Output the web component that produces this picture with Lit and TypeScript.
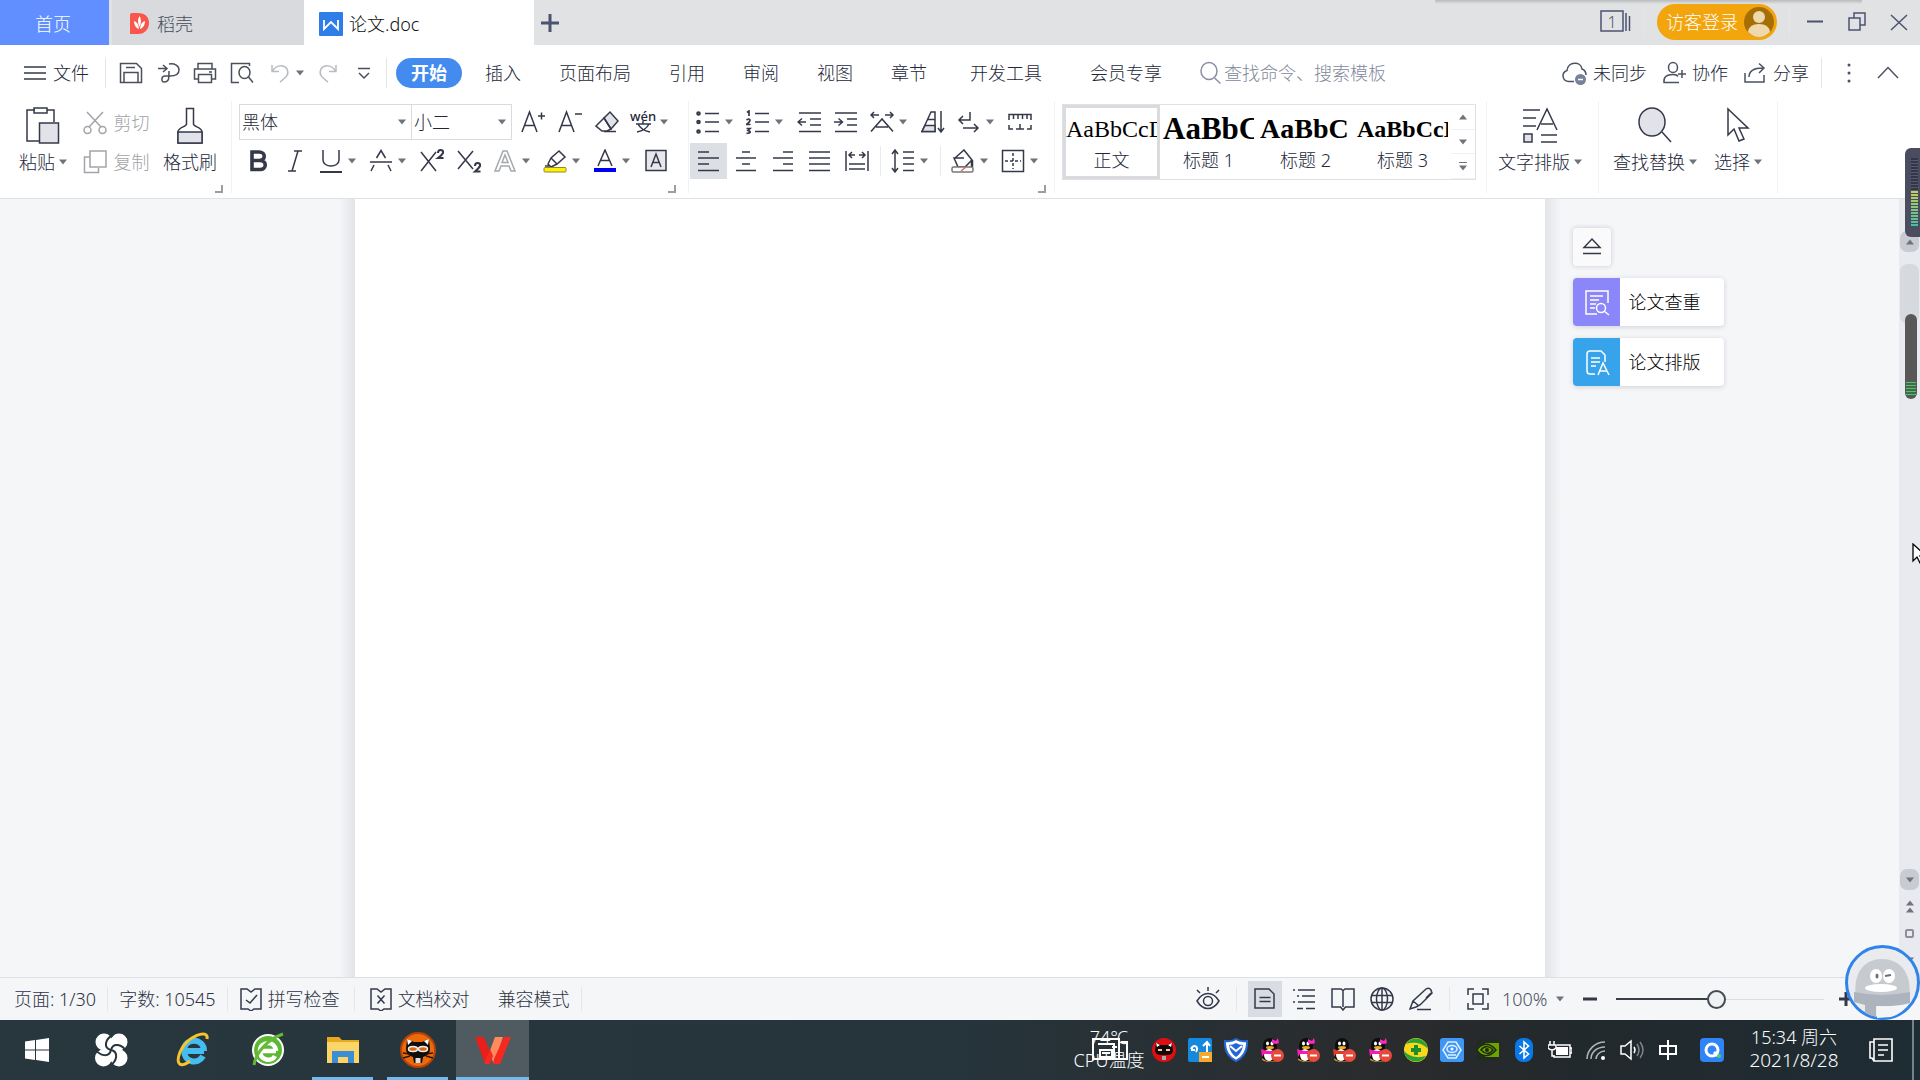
import { LitElement, html, svg, css, TemplateResult, SVGTemplateResult } from "lit";
import { customElement, state } from "lit/decorators.js";
import { classMap } from "lit/directives/class-map.js";

const icon = (body: SVGTemplateResult, w = 24, h = 24, cls = "ico"): TemplateResult =>
  html`<svg class=${cls} width=${w} height=${h} viewBox="0 0 ${w} ${h}" aria-hidden="true">${body}</svg>`;

const caret = html`<svg class="caret" width="8" height="6" viewBox="0 0 8 6" aria-hidden="true"><path d="M0 .5h8L4 5.5z" /></svg>`;

const I = {
  docer: svg`<path fill="#f9574c" d="M0 2q0-2 2-2h6c7 0 11 4 11 10s-4 11-11 11H0z"/><path fill="#fff" d="M9.500 3c2 3 2 7 0 11-2-4-2-8 0-11zM4 8c3 1 4.500 3 5 8-3-1-5-4-5-8zM15 8c-3 1-4.500 3-5 8 3-1 5-4 5-8z"/>`,
  writer: svg`<rect width="24" height="24" rx="1" fill="#2f7de9"/><path d="M5 8v9l7-7 7 7V8" fill="none" stroke="#fff" stroke-width="1.800"/>`,
  plus: svg`<path d="M10 1v18M1 10h18" stroke-width="3"/>`,
  count: svg`<rect x="1" y="1" width="22" height="20"/><path d="M26 3v18M29.500 6v15"/>`,
  person: svg`<circle cx="15" cy="15" r="15" fill="#a66f06"/><circle cx="15" cy="10" r="6" fill="#edd9ac"/><path d="M4 25q1-8 11-8t11 8q-5 5-11 5T4 25z" fill="#edd9ac"/>`,
  min: svg`<path d="M4 11.500h16" stroke-width="2"/>`,
  restore: svg`<path d="M4 8h11v12H4zM9 8V3h11v12h-5"/>`,
  close: svg`<path d="M4 5l16 15M20 5L4 20"/>`,
  burger: svg`<path d="M0 6h22M0 12h22M0 18h22"/>`,
  save: svg`<path d="M1.500 2.500h16l5 5v14h-21zM5 21.500v-10h14v10M7 6.500h9"/>`,
  exportDoc: svg`<path d="M2 7.500h8M7 4l4 3.500L7 11M13 3c6-1 10 2 10 6s-4 6-9 6H9c-4 0-4 6-1 6 5 0 5-3 5-11"/>`,
  print: svg`<path d="M5 8V2.500h14V8M5 18H1.500V8h21v10H19M5.500 13.500h13v8h-13zM16 11h3"/>`,
  preview: svg`<path d="M9 21.500H1.500v-19h18V5M18.500 16l4.500 5.500"/><ellipse cx="14.500" cy="11.500" rx="5.500" ry="6"/>`,
  undo: svg`<path d="M5 4v6.500h7M5.500 10C9 4 17 3 20 8c3 6-2 9-7 13"/>`,
  redo: svg`<path d="M21 4v6.500h-7M20.500 10C17 4 9 3 6 8c-3 6 2 9 7 13"/>`,
  custom: svg`<path d="M6 7.500h12M7 12l5 5 5-5"/>`,
  search: svg`<ellipse cx="9" cy="10" rx="8" ry="8.500"/><path d="M14.500 17l6 5.500"/>`,
  cloud: svg`<path d="M12 20.500H7c-7 0-8-9-2-11C6 0 19 0 20 8c3 1 4 3 4 6"/><circle cx="18.500" cy="18.500" r="5.500" fill="#77819a" stroke="none"/><path d="M16 18.500h5" stroke="#fff"/>`,
  collab: svg`<ellipse cx="11" cy="6.500" rx="4.500" ry="5"/><path d="M17 21.500H2q-1-8 9-8 4 0 5 2M20 9v8M16 13h8"/>`,
  share: svg`<path d="M2 12v9h19v-7M6 16c0-6 5-9 14-9M16 2.500l5 4.500-5 5"/>`,
  dots: svg`<g fill="#4b5263" stroke="none"><circle cx="12" cy="4" r="1.500"/><circle cx="12" cy="12" r="1.500"/><circle cx="12" cy="20" r="1.500"/></g>`,
  up: svg`<path d="M2 17L12 6.500 22 17"/>`,
  paste: svg`<path d="M10 3H2v31h12M22 3h7v12"/><rect x="9" y="1" width="13" height="5"/><rect x="14.500" y="16" width="19" height="20" fill="#e1e3e9"/>`,
  cut: svg`<path d="M4 1l14 15M20 1L6 16"/><circle cx="4.500" cy="19" r="3.500"/><circle cx="19.500" cy="19" r="3.500"/>`,
  copy: svg`<path d="M7 7H1.500v15.500h14V18"/><rect x="7" y="1" width="16" height="16"/>`,
  brush: svg`<path d="M10.500 1.500h7V17c0 3 8.500 3 8.500 8v11H2V25c0-5 8.500-5 8.500-8z"/><path d="M2 25h24v11H2z" fill="#e1e3e9"/>`,
  aPlus: svg`<path d="M1 22L8.500 2 16 22M4 15.500h9M17 6h7M20.500 2.500v7"/>`,
  aMinus: svg`<path d="M1 22L8.500 2 16 22M4 15.500h9M17 4h7"/>`,
  eraser: svg`<path d="M9 8l6-6 8 9-7 8z" fill="#e1e3e9"/><path d="M9 8l-8 8 6 5h5l4-2zM9 21.500h12"/>`,
  text: svg`<path d="M5 14h15M12 11v3M7 14c2 4 7 7 12 8M18 14c-2 4-6 7-12 8"/>`,
  bold: svg`<path d="M6 3h7c7 0 7 8.500 0 8.500H6zM6 11.500h8c7 0 7 9 0 9H6z" stroke-width="3.600"/>`,
  italic: svg`<path d="M11 2h8M5 22h8M15 2L9 22"/>`,
  under: svg`<path d="M4 1v10c0 8 16 8 16 0V1"/><path d="M1 23h22" stroke-width="2"/>`,
  strike: svg`<path d="M7.500 9L12 1.500 16.500 9M5 16l-3 6M19 16l3 6M1 13h22"/>`,
  sup: svg`<path d="M1 3l15 19M16 3L1 22"/><path d="M18 4q0-3 2.500-3 3 0 2.500 3-1 2-5 5h5.500" stroke-width="2"/>`,
  sub: svg`<path d="M1 2l15 18M16 2L1 20"/><path d="M18 17q0-3 2.500-3 3 0 2.500 3-1 2-5 5.500h5.500" stroke-width="2"/>`,
  ghostA: svg`<path d="M2 22L10 2h4l8 20h-4l-2-5H8l-2 5zM9 13.500h6L12 6z" stroke="#a5a8ad"/>`,
  marker: svg`<path d="M5 15l3-6 8-7 6 6-8 7-6 3zM8 9l6 6M2 17h5" /><rect x="1" y="18.500" width="22" height="4.500" rx="1" fill="#fff200" stroke="#8a8a3a" stroke-width="1"/>`,
  fontColor: svg`<path d="M5 17L12 1l7 16M7.500 11.500h9"/><path d="M1 21h22" stroke="#0000f0" stroke-width="4"/>`,
  boxedA: svg`<rect x="2" y="1.500" width="20" height="20" fill="#e6e8ec"/><path d="M7 18l5-13 5 13M9 13.500h6"/>`,
  bullets: svg`<path d="M9 3.500h14M9 12h14M9 21.500h14"/><g stroke-width="2"><circle cx="2.500" cy="3.500" r="1.300"/><circle cx="2.500" cy="12" r="1.300"/><circle cx="2.500" cy="21.500" r="1.300"/></g>`,
  numbers: svg`<path d="M9 3.500h14M9 12h14M9 21.500h14"/><path d="M1 2.500L3 1v5M.5 10q3-2 3.500 0 0 2-3.500 4.500h4M.5 18.500h3.500l-2 2q5 2-1.500 3" stroke-width="1.700"/>`,
  outdent: svg`<path d="M2 3h22M13 9h11M13 15h11M2 21.500h22M9 12H1M5 8.500L1 12l4 3.500"/>`,
  indent: svg`<path d="M1 3h22M13 9h10M13 15h10M1 21.500h22M0 12h8M4.500 8.500l4 3.500-4 3.500"/>`,
  scale: svg`<path d="M1 21.500L12 9l11 12.500M6 17h12M1 5h8M4 2L1 5l3 3M15 5h8M20 2l3 3-3 3"/>`,
  sort: svg`<path d="M1 21.500L10 2h4v19.500z"/><path d="M4 15.500h10v6H1z" fill="#e1e3e9"/><path d="M7 9.500h7M20 1v21M17 18l3 4 3-4"/>`,
  wrap: svg`<path d="M13 2v8H2M6 6l-4 4 4 4M6 18h15M17 14l4 4-4 4"/>`,
  ruler: svg`<path d="M1 10V4.500h22V10M5.500 4.500V9M10 4.500V9M14.500 4.500V9M19 4.500V9M1 15v4h4M19 19h4v-4M12 14v5M8 19h8"/>`,
  alignL: svg`<path d="M1 3h11M1 9h21M1 15h11M1 21.500h21"/>`,
  alignC: svg`<path d="M8 3h8M2 9h20M8 15h8M2 21.500h20"/>`,
  alignR: svg`<path d="M12 3h10M2 9h20M12 15h10M2 21.500h20"/>`,
  alignJ: svg`<path d="M1 3h21M1 9h21M1 15h21M1 21.500h21"/>`,
  dist: svg`<path d="M1 2v20M23 2v20M4 15h16M4 20h16M4 6h6M7 3L4 6l3 3M14 6h6M17 3l3 3-3 3"/>`,
  spacing: svg`<path d="M4 1v22M1 5l3-4 3 4M1 19l3 4 3-4M12 3h11M12 9h11M12 15h11M12 21.500h11"/>`,
  fill: svg`<path d="M4 9l9-8 8 10-7 7H7L3 9h10"/><path d="M21 11v7" stroke-width="2.500"/><rect x="1" y="18" width="21" height="5" rx="1.500" fill="#fff" stroke="#777"/><path d="M10 22l5-4" stroke="#d66"/>`,
  borders: svg`<rect x="1.500" y="1.500" width="21" height="21"/><path d="M12 4v16M4 12h16" stroke-dasharray="3 2"/>`,
  typeset: svg`<path d="M1 3h17M1 11h13M1 19h13M15 23L25 2l10 21M19 17h12M19 28h16M19 35h16"/><rect x="2" y="27" width="8" height="8" fill="#e1e3e9"/>`,
  find: svg`<ellipse cx="15" cy="15" rx="13" ry="14" fill="#e1e3e9"/><path d="M25 25l9 10"/>`,
  select: svg`<path d="M8 2v26l6-6 5 12 5-2-5-11h9z"/>`,
  spell: svg`<path d="M2 2h6l4 3 4-3h6v20H15l-3 2-3-2H2z"/><path d="M7 13l4 3 7-8"/>`,
  proof: svg`<path d="M2 2h6l4 3 4-3h6v20H15l-3 2-3-2H2z"/><path d="M8.500 8.500l7 8M15.500 8.500l-7 8"/>`,
  eye: svg`<path d="M1 14C7 4 17 4 23 14 17 24 7 24 1 14zM12 4V0M4 6L1 3M20 6l3-3"/><circle cx="12" cy="14" r="4.500"/>`,
  page: svg`<path d="M2 2h14l5 5v14H2zM6.500 10.500h11M6.500 14.500h11"/>`,
  outline: svg`<path d="M6 3h17M10 9h13M6 15h17M14 21.500h9M1 3h2M5 9h2M1 15h2M5 21.500h6"/>`,
  book: svg`<path d="M1 2h9l2 1.500L14 2h9v18h-8.500L12 23l-2.500-3H1zM12 3.500V20"/>`,
  globe: svg`<circle cx="12" cy="12" r="11"/><ellipse cx="12" cy="12" rx="5.500" ry="11"/><path d="M1.500 8.500h21M1.500 15.500h21M12 1v22"/>`,
  pen: svg`<path d="M1 22l3-8L17 2q3-2 5 1l1 3L11 18l-4 2zM4 14l6 5M8 22.500h14M17 11l5-5"/>`,
  fit: svg`<path d="M2 8V2h6M16 2h6v6M22 16v6h-6M8 22H2v-6"/><rect x="7" y="7" width="10" height="10"/>`,
  eject: svg`<path d="M4 12.500L12 4l8 8.500zM3 18.500h18" fill="none"/>`,
  check: svg`<path d="M13 25H2V2h22v12M6 7h13M6 11h9M6 15h6M6 19h5M20 22l5 4"/><circle cx="17" cy="19" r="4.500"/>`,
  format: svg`<path d="M11 25H6q-3 0-3-3V5q0-3 3-3h11l4 4v7M7 9h9M7 13h9M7 17h5M14 26l5-12 6 12M16 22h7"/>`,
  win: svg`<path fill="#fff" d="M0 3.500L10 2v9.500H0zM11 2l13-2v11.500H11zM0 12.500h10V22L0 20.500zM11 12.500h13V24l-13-2z"/>`,
  fan: svg`<g fill="#fff"><circle cx="10" cy="9" r="8.500"/><circle cx="25" cy="9" r="8.500"/><circle cx="25" cy="25" r="8.500"/><circle cx="9.500" cy="25" r="8.500"/><circle cx="17" cy="17" r="5"/></g><g fill="none" stroke="#28363c" stroke-width="2"><path d="M17 17C9 15 11 6 19 2"/><path d="M17 17c2-8 11-6 16 2"/><path d="M17 17c8 2 6 11-1 16"/><path d="M17 17c-2 8-11 6-16-1"/></g>`,
  ie: svg`<path d="M28 19H10M28 19C28 6 9 5 8 18c0 13 14 15 19 6" fill="none" stroke="#45bdf0" stroke-width="6"/><path d="M31 7C33-4 11 4 4 20-1 33 5 36 14 29" fill="none" stroke="#f5c32c" stroke-width="3"/>`,
  green: svg`<circle cx="17" cy="18" r="16" fill="#fff"/><circle cx="17" cy="18" r="14" fill="#5cb832"/><path d="M25 19H10M25 19C24 8 9 9 9 19c0 10 12 11 15 5" fill="none" stroke="#fff" stroke-width="4.500"/><path d="M3 33C5 20 17 7 32 2" fill="none" stroke="#64ba36" stroke-width="3"/>`,
  folder: svg`<path fill="#e9a91f" d="M1 4h12l3 3h17v6H1z"/><path fill="#fcd568" d="M1 9h32v21H1z"/><path fill="#3b8dd4" d="M6 18h22v12h-6v-6H12v6H6z"/>`,
  cat: svg`<circle cx="18" cy="18" r="17" fill="#ec6a0c" stroke="#b84206" stroke-width="2"/><path fill="#100e0c" d="M7 7l7 3h8l7-3 1 10q0 6-7 8l-1 6h-8l-1-6q-7-2-7-8z"/><path d="M7 7l5 2-4 4zM29 7l-5 2 4 4z" fill="#fff"/><ellipse cx="13" cy="17" rx="4.500" ry="2.500" fill="#dc6616" stroke="#eee" stroke-width="1.500"/><ellipse cx="23" cy="17" rx="4.500" ry="2.500" fill="#dc6616" stroke="#eee" stroke-width="1.500"/><path d="M15.500 26h5v5h-5z" fill="#ddd"/><path d="M3 21l7 1M3 26l7-2M33 21l-7 1M33 26l-7-2" stroke="#331505"/>`,
  wps: svg`<path fill="#e8201c" d="M0 4h9l7 17-3 10h-3z"/><path fill="#ff8a5c" d="M10 31L20 4h8l-9 27-3-7z"/><path fill="#f7281e" d="M18 31h7L36 4h-7L19 26z"/><path fill="#f7281e" d="M10 31h5l3-8-3-7z"/>`,
  overlap: svg`<g fill="none" stroke="#fff" stroke-width="2"><rect x="1" y="1" width="26" height="20"/><path d="M29 4h6v17h-8M6 6h16v15M8 12h12v7H8zM10 15h8M20 9h5"/></g>`,
  redCat: svg`<circle cx="12" cy="12" r="12" fill="#df0e13"/><path d="M4 5l5 2h6l5-2 1 8q-1 4-6 4H9q-5 0-6-4z" fill="#100909"/><path d="M4 5l4 2-3 2zM20 5l-4 2 3 2z" fill="#fff"/><path d="M6 12h4M14 12h4" stroke="#f7c6a2" stroke-width="2"/><path d="M10 18h4v4h-4z" fill="#aaa"/>`,
  netApp: svg`<rect width="24" height="24" rx="2" fill="#1688dd"/><path d="M3 11c3-6 8-2 5 3M19 14V4M15 8l4-4 3 4M4 9v3h3" fill="none" stroke="#fff" stroke-width="2"/><rect x="11" y="14" width="13" height="10" fill="#f9a72d"/><path d="M14 19h7" stroke="#fff" stroke-width="2"/>`,
  shield: svg`<path d="M1 3q7 1 11-2 4 3 11 2 1 14-11 20Q0 17 1 3z" fill="#fff" stroke="#2567d3" stroke-width="2"/><path d="M5 7q4 0 7-2 3 2 7 2-1 8-7 12Q6 15 5 7z" fill="#2567d3"/><path d="M6 8l6 5 6-5" fill="none" stroke="#fff" stroke-width="2"/>`,
  medic: svg`<circle cx="12" cy="12" r="12" fill="#f9d71c"/><path d="M2 6C9-4 23 1 24 11 17 4 9 4 2 6z" fill="#2aa336"/><path d="M22 18C15 28 1 23 0 13c7 7 15 7 22 5z" fill="#2aa336"/><path d="M12 7v10M7 12h10" stroke="#198e2b" stroke-width="4"/>`,
  hex: svg`<rect width="24" height="24" rx="3" fill="#3f97f5"/><g fill="none" stroke="#e1f0ff" stroke-width="1.500"><path d="M8 4h8l5 8-5 8H8l-5-8z"/><ellipse cx="12" cy="11" rx="5" ry="3.500"/><path d="M8 17h8"/></g><circle cx="12" cy="11" r="1.500" fill="#fff"/>`,
  nvidia: svg`<rect x="1" y="1" width="23" height="22" fill="#222b22"/><path d="M9 5h14v14H9z" fill="#6ba300"/><path d="M1 12C5 5 13 4 20 12 13 20 5 19 1 12z" fill="#6ba300" stroke="#1f290f"/><path d="M5 12c4-5 9-4 12 0-4 5-8 4-12 0z" fill="none" stroke="#1f290f" stroke-width="1.500"/><circle cx="11" cy="12" r="2" fill="#1f290f"/>`,
  bt: svg`<rect x="3" y="0" width="18" height="24" rx="8" fill="#0a78e6"/><path d="M7.500 8l9 8-4.500 4V4l4.500 4-9 8" fill="none" stroke="#fff" stroke-width="1.600"/>`,
  battery: svg`<g fill="none" stroke="#fff" stroke-width="1.500"><path d="M9 7h13v12H6v-2M22 10h2v5h-2M2 3v4M6 3v4M0 7h8v3q-4 4-8 0zM4 12v6h2"/></g><path d="M8 9h12v8H8z" fill="#fff"/>`,
  wifi: svg`<g fill="none" stroke="#aeb5b9" stroke-width="1.600"><path d="M3 21C3 12 11 4 21 4M7 21c0-7 6-12 14-12M12 21c0-4 4-8 9-8"/></g><circle cx="19" cy="20" r="2" fill="#fff"/>`,
  volume: svg`<g fill="none" stroke="#fff" stroke-width="1.500"><path d="M1 8h4l6-5v18l-6-5H1z"/><path d="M14 9q2 3 0 6"/><path d="M17 6q4 6 0 12M20 4q6 8 0 16" stroke="#7d868b"/></g>`,
  ime: svg`<path d="M4 8h16v8H4zM12 2v20" fill="none" stroke="#fff" stroke-width="2"/>`,
  qApp: svg`<rect width="24" height="24" rx="4" fill="#2f84f7"/><circle cx="12" cy="12" r="6" fill="none" stroke="#fff" stroke-width="3"/><path d="M14 14l4 4" stroke="#fff" stroke-width="3"/><circle cx="19" cy="18" r="2" fill="#57d15c"/>`,
  notice: svg`<g fill="none" stroke="#fff" stroke-width="1.600"><path d="M5 1h18v22H5zM5 4H1v16h2l2 3M9 7h10M9 12h10M9 17h6"/></g>`,
  mascot: svg`<circle cx="37.500" cy="37.500" r="36" fill="#e9ebef" stroke="#2f83ea" stroke-width="3"/><path d="M11 54C7 27 20 14 37 14s31 13 27 40z" fill="#c7cacf"/><path d="M9 47q28 6 56 0v11q-15 4-34 3v11l-11-4V60L9 57z" fill="#adb4be"/><path d="M32 61q18 1 31-2-6 10-17 13l-14 1z" fill="#f4f5f7"/><ellipse cx="31" cy="31" rx="6" ry="7" fill="#fff"/><ellipse cx="44" cy="31" rx="6" ry="7" fill="#fff"/><ellipse cx="32" cy="31" rx="1.500" ry="2.500" fill="#6a6f78"/><path d="M40 31l6-1" stroke="#6a6f78" stroke-width="2"/><ellipse cx="36" cy="43" rx="16" ry="4" fill="#fff"/>`,
  pointer: svg`<path d="M1 1v17l4-4 3 6 3-1-3-6h6z" fill="#fff" stroke="#000" stroke-width="1.300"/>`,
};

const penguin = (scarf: string, bow: boolean) => svg`<ellipse cx="10" cy="21" rx="8" ry="3" fill="#e8a619"/><ellipse cx="10" cy="8" rx="7" ry="8" fill="#0d0d0d"/><path d="M2 12h16l2 8q-10 7-18 0z" fill="#0d0d0d"/><ellipse cx="9" cy="17" rx="5" ry="6" fill="#fff"/><path d="M1 11q9 4 18 0l-1 5H4l-2 3z" fill=${scarf}/><ellipse cx="7.500" cy="5.500" rx="1.500" ry="2" fill="#fff"/><ellipse cx="12" cy="5.500" rx="1.500" ry="2" fill="#fff"/><ellipse cx="10" cy="9.500" rx="4" ry="1.500" fill="#f2ae1c"/>${bow ? svg`<path d="M12 1l4 2 2-3 1 5-3 1-4-1z" fill="#ff29c5"/>` : null}<circle cx="17.500" cy="17.500" r="6.500" fill="#e64a3b"/><path d="M14 17.500h7" stroke="#fff" stroke-width="2"/>`;

type Tool = [string, SVGTemplateResult, boolean?];

const FONT_TOP: Tool[] = [["增大字号", I.aPlus], ["减小字号", I.aMinus], ["清除格式", I.eraser]];
const FONT_ROW: Tool[] = [
  ["加粗", I.bold], ["倾斜", I.italic], ["下划线", I.under, true], ["删除线", I.strike, true], ["上标", I.sup],
  ["下标", I.sub], ["文字效果", I.ghostA, true], ["突出显示", I.marker, true], ["字体颜色", I.fontColor, true], ["字符底纹", I.boxedA],
];
const PARA_TOP: Tool[] = [
  ["项目符号", I.bullets, true], ["编号", I.numbers, true], ["减少缩进量", I.outdent], ["增加缩进量", I.indent],
  ["中文版式", I.scale, true], ["排序", I.sort], ["显示段落标记", I.wrap, true], ["标尺", I.ruler],
];
const ALIGN: Tool[] = [["左对齐", I.alignL], ["居中", I.alignC], ["右对齐", I.alignR], ["两端对齐", I.alignJ], ["分散对齐", I.dist]];
const VIEWS: Tool[] = [["页面视图", I.page], ["大纲", I.outline], ["阅读版式", I.book], ["Web 版式", I.globe], ["写作模式", I.pen]];
const TABS = ["开始", "插入", "页面布局", "引用", "审阅", "视图", "章节", "开发工具", "会员专享"];
const STYLES: [string, string, string][] = [
  ["正文", "body", "AaBbCcD"], ["标题 1", "h1", "AaBbC"], ["标题 2", "h2", "AaBbC"], ["标题 3", "h3", "AaBbCcD"],
];
const TRAY: Tool[] = [
  ["录屏", I.redCat], ["网络", I.netApp], ["电脑管家", I.shield], ["QQ 1", penguin("#f41fb2", true)], ["QQ 2", penguin("#f41fb2", true)],
  ["QQ 3", penguin("#e03a2b", false)], ["QQ 4", penguin("#f41fb2", true)], ["安全卫士", I.medic], ["助手", I.hex], ["显卡设置", I.nvidia],
  ["蓝牙", I.bt], ["电源", I.battery], ["无线网络", I.wifi], ["音量", I.volume], ["输入法", I.ime],
];

@customElement("app-root")
export class AppRoot extends LitElement {
  @state() private tab = "开始";
  @state() private align = "左对齐";
  @state() private view = "页面视图";
  @state() private style_ = "正文";
  @state() private zoom = 48;

  static styles = css`
    :host {
      display: flex;
      flex-direction: column;
      height: 100vh;
      overflow: hidden;
      background: #fff;
      color: #23273a;
      font: 300 18px/24px "Noto Sans", "Noto Sans CJK SC", sans-serif;
    }
    * { box-sizing: border-box; }
    button, input, select {
      font: inherit;
      color: inherit;
      background: none;
      border: 0;
      padding: 0;
      margin: 0;
      outline: none;
    }
    button {
      display: flex;
      align-items: center;
      justify-content: center;
      flex: none;
      white-space: nowrap;
    }
    svg { display: block; flex: none; }
    .ico { fill: none; stroke: #343849; stroke-width: 1.500; }
    .caret { fill: #6f737c; }
    .grow { flex: 1; }
    .rule { width: 1px; height: 30px; background: #e4e6ea; flex: none; }

    .titlebar { display: flex; height: 45px; flex: none; background: #e1e2e4; position: relative; }
    .apptab { gap: 8px; padding-top: 2px; justify-content: flex-start; }
    .apptab.home { width: 109px; margin-right: 3px; padding-left: 35px; background: #618fff; color: #fff; }
    .apptab.docer { width: 192px; padding-left: 18px; background: #d9dadd; color: #464b5c; }
    .apptab.doc { width: 230px; padding-left: 15px; gap: 6px; background: #fff; color: #111; }
    .newtab { width: 32px; }
    .titlebar .ico { stroke: #4c5270; }
    .docer .ico, .doc .ico, .guest .ico { stroke: none; }
    .doc .ico path { stroke: #fff; }
    .edge { position: absolute; top: 0; left: 1435px; right: 58px; height: 4px; background: linear-gradient(#b9babc, #e1e2e4); }
    .winright { display: flex; align-items: center; padding-bottom: 1px; }
    .count { display: grid; width: 32px; height: 24px; margin-right: 12px; }
    .count > * { grid-area: 1 / 1; }
    .count span { width: 24px; font-size: 16px; line-height: 22px; text-align: center; color: #4c5270; }
    .guest { height: 36px; margin: 0 12px; padding: 0 3px 0 9px; gap: 6px; border-radius: 18px; background: #f3a50e; color: #fff; }
    .guest + .rule { margin-right: 4px; }
    .winbtn { width: 42px; height: 40px; }

    .menubar { display: flex; align-items: center; height: 56px; flex: none; padding: 0 20px 0 24px; }
    .file { gap: 7px; margin-right: 16px; }
    .quick { display: flex; align-items: center; padding-left: 6px; margin-right: 4px; }
    .quick button { width: 37px; height: 32px; }
    .quick .pair { width: 48px; gap: 5px; padding-left: 7px; justify-content: flex-start; }
    .quick .ico { stroke: #4b4f5b; }
    .quick .off .ico { stroke: #b9bcc2; }
    .tabs { display: flex; gap: 8px; margin-left: 9px; }
    .tabs button { height: 30px; padding: 0 15px; border-radius: 15px; }
    .tabs .wide { padding: 0 20px; }
    .tabs .on { background: #448bf0; color: #fff; font-weight: 700; }
    .search { display: flex; align-items: center; margin-left: 18px; width: 230px; }
    .search .ico, .search input::placeholder { stroke: #8790a3; color: #7f889c; opacity: 1; }
    .search input { width: 200px; min-width: 0; }
    .account { display: flex; align-items: center; gap: 15px; }
    .account button { gap: 6px; }
    .account .ico { stroke: #4b5263; }
    .account .slim { width: 24px; }
    .account .rule { margin-left: -3px; }

    .ribbon { display: flex; height: 98px; flex: none; border-bottom: 1px solid #dfe1e4; }
    .group { display: flex; align-items: flex-start; position: relative; height: 92px; padding-top: 3px; border-right: 1px solid #f1f2f4; }
    .clip { width: 232px; padding-left: 19px; }
    .big { flex-direction: column; align-items: center; gap: 5px; padding-top: 3px; }
    .big span { display: flex; align-items: center; gap: 4px; }
    .pile { display: flex; flex-direction: column; gap: 15px; width: 66px; margin: 7px 14px 0 16px; }
    .pile button { gap: 7px; color: #a2a4a9; }
    .pile .ico { stroke: #a2a4a9; }
    .corner { position: absolute; right: 8px; bottom: 0; width: 8px; height: 8px; border: solid #9a9da3; border-width: 0 2px 2px 0; }
    .font { width: 457px; padding-left: 7px; }
    .font .corner { right: 12px; }
    .para { width: 366px; padding-left: 1px; }
    .rows { display: flex; flex-direction: column; gap: 3px; }
    .row { display: flex; align-items: center; height: 36px; }
    .combo { display: grid; align-items: center; height: 36px; border: 1px solid #d9dbe0; }
    .combo > * { grid-area: 1 / 1; }
    .combo select { appearance: none; width: 100%; padding-left: 2px; }
    .combo .caret { justify-self: end; margin-right: 5px; pointer-events: none; }
    .combo.name { width: 173px; }
    .combo.size { width: 100px; border-left: 0; margin-right: 2px; }
    .tool { width: 37px; height: 36px; }
    .tool.drop { width: 50px; padding-left: 6px; gap: 5px; justify-content: flex-start; }
    .tool.on { background: #dcdfe4; }
    .row .rule { margin: 0 4px 0 5px; background: #e9ebee; }
    .wen { display: grid; width: 24px; height: 24px; }
    .wen > * { grid-area: 1 / 1; }
    .wen span { font-size: 13px; font-weight: 500; line-height: 12px; text-align: center; margin: 0 -4px; }
    .gallery { padding: 3px 10px 0 7px; width: 432px; }
    .styles { display: flex; height: 76px; border: 1px solid #dfe1e5; }
    .swatch { flex-direction: column; gap: 3px; width: 97px; height: 74px; overflow: hidden; border: 3px solid transparent; }
    .swatch.on { border-color: #d9dbdf; }
    .sample { width: 91px; height: 32px; line-height: 32px; overflow: hidden; text-align: left; color: #000; font-family: "Liberation Serif", serif; font-weight: 700; }
    .sample.body { font-weight: 400; font-size: 24px; }
    .sample.h1 { font-size: 31px; }
    .sample.h2 { font-size: 28px; }
    .sample.h3 { font-size: 24px; }
    .stepper { display: flex; flex-direction: column; width: 24px; }
    .stepper button { flex: 1; border-bottom: 1px solid #eef0f2; flex-direction: column; gap: 2px; }
    .stepper .bar { width: 8px; height: 1px; background: #6f737c; }
    .typeset { padding-left: 11px; width: 112px; }
    .edit { padding-left: 14px; gap: 17px; width: 179px; }

    .work { display: flex; flex: 1; min-height: 0; background: #f5f6f8; }
    .canvas { display: grid; grid-template-columns: 1fr 1190px 1fr; flex: 1; min-width: 0; }
    .shade { justify-self: end; width: 16px; background: linear-gradient(90deg, #f5f6f8, #e3e4e8); }
    .sheet { background: #fff; }
    .side { display: flex; flex-direction: column; align-items: flex-start; gap: 12px; padding: 29px 0 0 28px; background: linear-gradient(90deg, #e3e4e8, #f5f6f8 16px); }
    .side .fold { width: 38px; height: 38px; border-radius: 4px; background: #fafafb; box-shadow: 0 0 5px #c9cbd0; }
    .card { width: 151px; height: 48px; border-radius: 4px; overflow: hidden; background: #fff; color: #000; box-shadow: 0 1px 5px #cfd1d6; justify-content: flex-start; gap: 9px; }
    .badge { display: flex; align-items: center; justify-content: center; width: 47px; height: 48px; padding-left: 3px; background: #8c86fb; }
    .badge.blue { background: #37a3ea; }
    .badge .ico { stroke: #fff; }
    .scroll { position: relative; display: flex; flex-direction: column; align-items: center; width: 21px; padding: 32px 0 6px; background: #e8eaef; }
    .scroll button { width: 19px; height: 21px; border-radius: 7px; background: #c9cbd2; }
    .thumb { width: 19px; height: 60px; margin-top: 12px; border-radius: 8px; background: #d6d9dd; }
    .scroll .plain { background: none; height: 22px; flex-direction: column; gap: 1px; margin-top: 5px; }
    .square { width: 9px; height: 9px; border: 2px solid #8d909c; border-radius: 2px; }
    .flip { transform: rotate(180deg); }
    .meter { position: absolute; top: -51px; left: 6px; width: 16px; height: 89px; border-radius: 6px 0 0 6px; background: #4a4d60; padding: 10px 0 0 6px; z-index: 2; }
    .ticks { width: 7px; height: 33px; background: repeating-linear-gradient(#33364a 0 2px, #565a6c 2px 3px); }
    .ticks.hot { height: 35px; background: repeating-linear-gradient(transparent 0 2px, #4a4d60 2px 3px), linear-gradient(#c8cf5b, #43c0a0); }
    .meter.low { top: 115px; width: 12px; height: 85px; border-radius: 6px; background: #585858; padding: 68px 1px 0; }
    .low .ticks { width: 10px; height: 14px; background: repeating-linear-gradient(#58bd70 0 1px, #416b4a 1px 3px); }
    .cursor { position: absolute; top: 344px; left: 13px; width: 8px; overflow: hidden; }

    .status { display: flex; align-items: center; height: 43px; flex: none; padding: 0 57px 0 14px; background: #f5f6f8; border-top: 1px solid #dcdfe4; position: relative; color: #2e3344; }
    .status .rule { height: 24px; }
    .facts { display: flex; align-items: center; }
    .facts .rule { margin: 0 11px; }
    .facts button { gap: 5px; }
    .facts .far { margin: 0 14px; }
    .facts .proof { margin-right: 28px; }
    .views { display: flex; align-items: center; gap: 5px; }
    .views button { width: 34px; height: 36px; }
    .views .on { background: #d9dce2; }
    .views .rule { margin: 0 6px; }
    .pct { gap: 9px; width: 71px; margin-left: 7px; color: #4a4f5e; justify-content: flex-start; }
    .zoomer { display: flex; align-items: center; }
    .zoomer .end { width: 34px; height: 34px; }
    .range { appearance: none; width: 208px; height: 20px; margin: 0 5px 0 9px; background: linear-gradient(#3a3e48, #3a3e48) 0 50% / 48% 2px no-repeat, linear-gradient(#dbdde1, #dbdde1) 0 50% / 100% 1px no-repeat; }
    .range::-webkit-slider-thumb { appearance: none; width: 19px; height: 19px; border-radius: 50%; border: 2px solid #454a55; background: #f0f1f3; }
    .mascot { position: absolute; right: 0; bottom: 0; width: 75px; height: 75px; z-index: 3; }
    .mascot .ico { stroke: none; }

    .taskbar { display: flex; height: 60px; flex: none; background: linear-gradient(90deg, #28373e, #26343b 50%, #2a2b2c 73%, #22292c 82%, #1e2c34); color: #fff; }
    .taskbar .ico { stroke: none; }
    .apps { display: flex; gap: 2px; }
    .apps.pins { gap: 1px; margin-right: 9px; }
    .apps button { width: 73px; height: 60px; border-bottom: 3px solid transparent; padding-top: 3px; }
    .apps .open { background: linear-gradient(#76b9ed, #76b9ed) 50% 100% / 61px 3px no-repeat; background-origin: border-box; background-clip: border-box; }
    .apps .front { background: #505b61; border-bottom-color: #76b9ed; }
    .temp { position: relative; width: 74px; padding-top: 6px; text-align: center; line-height: 23px; white-space: nowrap; }
    .temp .ico { position: absolute; left: 20px; top: 18px; }
    .tray { display: flex; }
    .tray button { width: 36px; }
    .tray .last { width: 52px; }
    .clock { width: 112px; padding-bottom: 3px; flex-direction: column; font-size: 19px; line-height: 23px; }
    .clock span { font-size: 18px; }
    .notice { width: 62px; }
    .desktop { width: 8px; border-left: 2px solid #76818a; }
  `;

  private tool([label, body, drop]: Tool, on = false, pick?: () => void) {
    return html`<button class=${classMap({ tool: true, drop: !!drop, on })} aria-label=${label} @click=${pick}>${icon(body)}${drop ? caret : null}</button>`;
  }

  private titlebar() {
    return html`<header class="titlebar">
      <button class="apptab home">首页</button>
      <button class="apptab docer">${icon(I.docer, 19, 21)}稻壳</button>
      <button class="apptab doc">${icon(I.writer)}论文.doc</button>
      <button class="newtab" aria-label="新建">${icon(I.plus, 20, 20)}</button>
      <div class="grow"></div>
      <div class="edge"></div>
      <div class="winright">
        <button class="count" aria-label="窗口数">${icon(I.count, 32, 24)}<span>1</span></button>
        <i class="rule"></i>
        <button class="guest">访客登录${icon(I.person, 30, 30)}</button>
        <i class="rule"></i>
        <button class="winbtn" aria-label="最小化">${icon(I.min)}</button>
        <button class="winbtn" aria-label="还原">${icon(I.restore)}</button>
        <button class="winbtn" aria-label="关闭">${icon(I.close)}</button>
      </div>
    </header>`;
  }

  private menubar() {
    return html`<nav class="menubar">
      <button class="file">${icon(I.burger, 22, 24)}文件</button>
      <i class="rule"></i>
      <div class="quick">
        <button aria-label="保存">${icon(I.save)}</button>
        <button aria-label="输出">${icon(I.exportDoc)}</button>
        <button aria-label="打印">${icon(I.print)}</button>
        <button aria-label="打印预览">${icon(I.preview)}</button>
        <button class="pair off" aria-label="撤销">${icon(I.undo)}${caret}</button>
        <button class="off" aria-label="恢复">${icon(I.redo)}</button>
        <button aria-label="自定义快速访问">${icon(I.custom)}</button>
      </div>
      <i class="rule"></i>
      <div class="tabs">
        ${TABS.map((t) => html`<button class=${classMap({ on: t === this.tab, wide: t === "开发工具" || t === "会员专享" })} @click=${() => (this.tab = t)}>${t}</button>`)}
      </div>
      <label class="search">${icon(I.search)}<input type="text" placeholder="查找命令、搜索模板" aria-label="查找命令、搜索模板" /></label>
      <div class="grow"></div>
      <div class="account">
        <button>${icon(I.cloud, 25, 24)}未同步</button>
        <button>${icon(I.collab)}协作</button>
        <button>${icon(I.share)}分享</button>
        <i class="rule"></i>
        <button class="slim" aria-label="更多">${icon(I.dots)}</button>
        <button class="slim" aria-label="收起功能区">${icon(I.up)}</button>
      </div>
    </nav>`;
  }

  private ribbon() {
    return html`<section class="ribbon">
      <div class="group clip">
        <button class="big">${icon(I.paste, 36, 38)}<span>粘贴${caret}</span></button>
        <div class="pile">
          <button>${icon(I.cut)}剪切</button>
          <button>${icon(I.copy)}复制</button>
        </div>
        <button class="big">${icon(I.brush, 28, 38)}<span>格式刷</span></button>
        <i class="corner"></i>
      </div>
      <div class="group font">
        <div class="rows">
          <div class="row">
            <label class="combo name"><select aria-label="字体"><option>黑体</option></select>${caret}</label>
            <label class="combo size"><select aria-label="字号"><option>小二</option></select>${caret}</label>
            ${FONT_TOP.map((t) => this.tool(t))}
            <button class="tool drop" aria-label="拼音指南"><span class="wen">${icon(I.text)}<span>wén</span></span>${caret}</button>
          </div>
          <div class="row">${FONT_ROW.map((t) => this.tool(t))}</div>
        </div>
        <i class="corner"></i>
      </div>
      <div class="group para">
        <div class="rows">
          <div class="row">${PARA_TOP.map((t) => this.tool(t))}</div>
          <div class="row">
            ${ALIGN.map((t) => this.tool(t, t[0] === this.align, () => (this.align = t[0])))}
            <i class="rule"></i>${this.tool(["行距", I.spacing, true])}
            <i class="rule"></i>${this.tool(["底纹颜色", I.fill, true])}${this.tool(["边框", I.borders, true])}
          </div>
        </div>
        <i class="corner"></i>
      </div>
      <div class="group gallery">
        <div class="styles">
          ${STYLES.map(([name, kind, sample]) => html`<button class=${classMap({ swatch: true, on: name === this.style_ })} @click=${() => (this.style_ = name)}>
            <span class="sample ${kind}">${sample}</span><span>${name}</span>
          </button>`)}
          <div class="stepper">
            <button aria-label="上一行"><span class="flip">${caret}</span></button>
            <button aria-label="下一行">${caret}</button>
            <button aria-label="更多样式"><i class="bar"></i>${caret}</button>
          </div>
        </div>
      </div>
      <div class="group typeset"><button class="big">${icon(I.typeset, 36, 38)}<span>文字排版${caret}</span></button></div>
      <div class="group edit">
        <button class="big">${icon(I.find, 36, 38)}<span>查找替换${caret}</span></button>
        <button class="big">${icon(I.select, 36, 38)}<span>选择${caret}</span></button>
      </div>
    </section>`;
  }

  private work() {
    return html`<main class="work">
      <div class="canvas">
        <div class="shade"></div>
        <div class="sheet"></div>
        <aside class="side">
          <button class="fold" aria-label="收起">${icon(I.eject)}</button>
          <button class="card"><span class="badge">${icon(I.check, 27, 27)}</span>论文查重</button>
          <button class="card"><span class="badge blue">${icon(I.format, 27, 27)}</span>论文排版</button>
        </aside>
      </div>
      <div class="scroll">
        <button aria-label="向上滚动"><span class="flip">${caret}</span></button>
        <div class="thumb"></div>
        <div class="grow"></div>
        <button aria-label="向下滚动">${caret}</button>
        <button class="plain" aria-label="上一页"><span class="flip">${caret}</span><span class="flip">${caret}</span></button>
        <button class="plain" aria-label="选择浏览对象"><i class="square"></i></button>
        <button class="plain" aria-label="下一页">${caret}</button>
        <div class="meter"><div class="ticks"></div><div class="ticks hot"></div></div>
        <div class="meter low"><div class="ticks"></div></div>
        <div class="cursor">${icon(I.pointer, 16, 22, "")}</div>
      </div>
    </main>`;
  }

  private status() {
    return html`<footer class="status">
      <div class="facts">
        <span>页面: 1/30</span><i class="rule"></i><span>字数: 10545</span><i class="rule"></i>
        <button>${icon(I.spell)}拼写检查</button><i class="rule far"></i>
        <button class="proof">${icon(I.proof)}文档校对</button>
        <span>兼容模式</span><i class="rule"></i>
      </div>
      <div class="grow"></div>
      <div class="views">
        <button aria-label="护眼模式">${icon(I.eye)}</button><i class="rule"></i>
        ${VIEWS.map(([label, body]) => html`<button class=${classMap({ on: label === this.view })} aria-label=${label} @click=${() => (this.view = label)}>${icon(body)}</button>`)}
        <i class="rule"></i><button aria-label="最佳显示比例">${icon(I.fit)}</button>
      </div>
      <button class="pct">100%${caret}</button>
      <div class="zoomer">
        <button class="end" aria-label="缩小">${icon(svg`<path d="M5 12h14" stroke-width="3"/>`)}</button>
        <input class="range" type="range" aria-label="显示比例" .value=${String(this.zoom)} @input=${(e: Event) => (this.zoom = Number((e.target as HTMLInputElement).value))} />
        <button class="end" aria-label="放大">${icon(svg`<path d="M5 12h14M12 5v14" stroke-width="3"/>`)}</button>
      </div>
      <button class="mascot" aria-label="助手">${icon(I.mascot, 75, 75)}</button>
    </footer>`;
  }

  private taskbar() {
    return html`<footer class="taskbar">
      <div class="apps pins">
        <button aria-label="开始菜单">${icon(I.win)}</button>
        <button aria-label="搜索">${icon(I.fan, 34, 34)}</button>
      </div>
      <div class="apps">
        <button aria-label="Internet Explorer">${icon(I.ie, 34, 36)}</button>
        <button aria-label="浏览器">${icon(I.green, 34, 36)}</button>
        <button class="open" aria-label="文件资源管理器">${icon(I.folder, 34, 34)}</button>
        <button class="open" aria-label="录屏工具">${icon(I.cat, 36, 36)}</button>
        <button class="front" aria-label="WPS">${icon(I.wps, 36, 34)}</button>
      </div>
      <div class="grow"></div>
      <div class="temp">74℃<br />CPU温度${icon(I.overlap, 36, 24)}</div>
      <div class="tray">
        ${TRAY.map(([label, body]) => html`<button aria-label=${label}>${icon(body)}</button>`)}
        <button class="last" aria-label="Q">${icon(I.qApp)}</button>
      </div>
      <button class="clock"><span>15:34 周六</span>2021/8/28</button>
      <button class="notice" aria-label="通知">${icon(I.notice)}</button>
      <button class="desktop" aria-label="显示桌面"></button>
    </footer>`;
  }

  render() {
    return html`${this.titlebar()}${this.menubar()}${this.ribbon()}${this.work()}${this.status()}${this.taskbar()}`;
  }
}
